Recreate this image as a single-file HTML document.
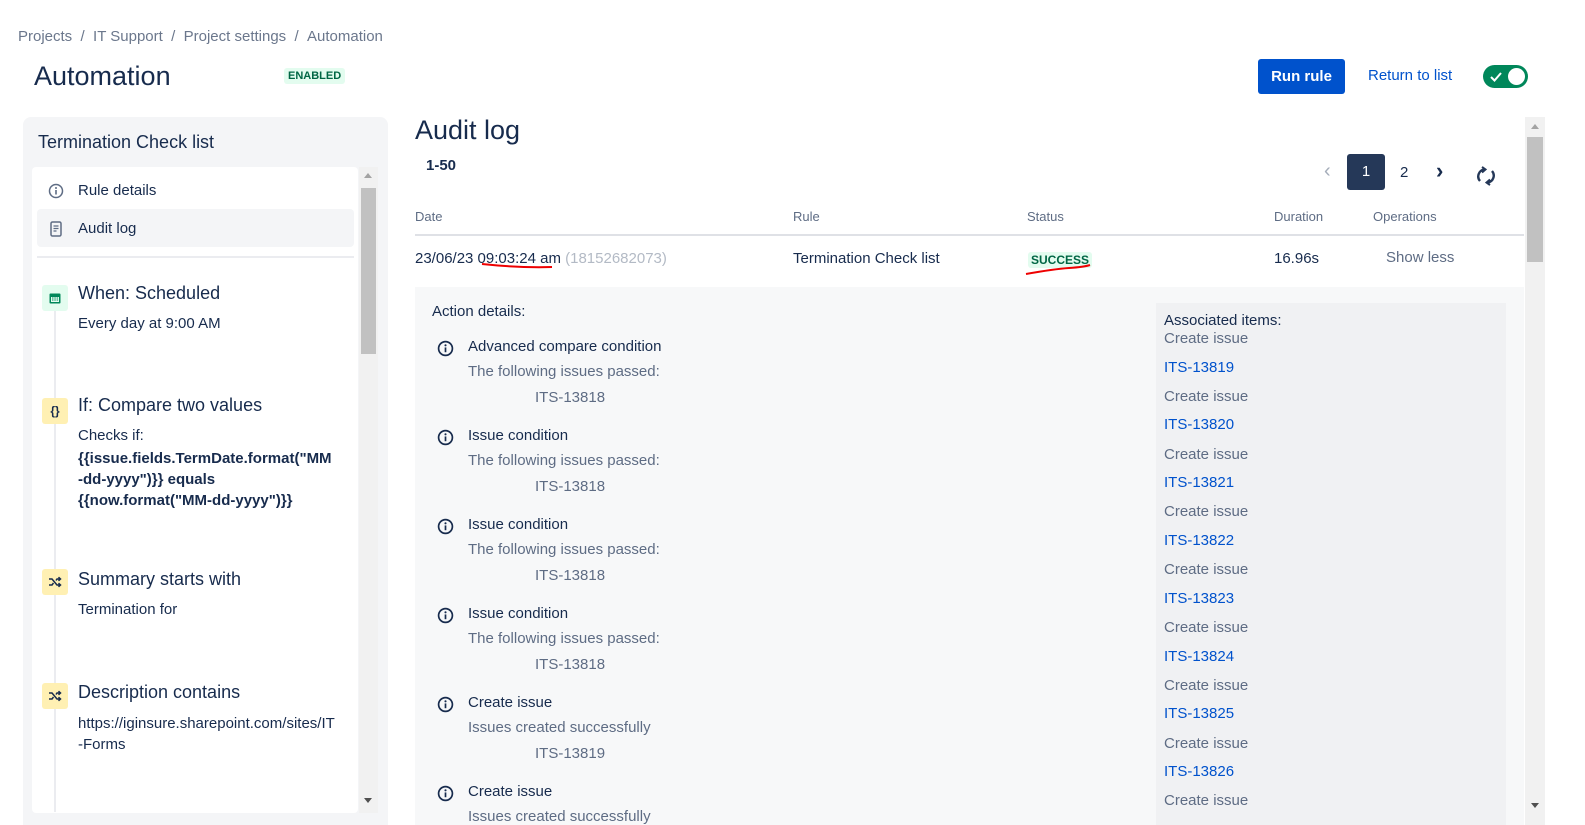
<!DOCTYPE html>
<html style="overflow:hidden;width:1585px;height:825px"><head><meta charset="utf-8"><style>
*{margin:0;padding:0;box-sizing:border-box}
body{width:1585px;height:825px;overflow:hidden;background:#fff;font-family:"Liberation Sans",sans-serif;color:#172b4d;font-size:15px}
#w{position:relative;width:1585px;height:825px;overflow:hidden}
.a{position:absolute;white-space:nowrap}
.g{color:#5e6c84}
.link{color:#0052cc}
.ic{position:absolute;width:26px;height:26px;border-radius:3px;display:flex;align-items:center;justify-content:center}
</style></head><body><div id="w">
<div class="a g" style="left:18px;top:28px;font-size:15px;color:#6b778c">Projects &nbsp;/ &nbsp;IT Support &nbsp;/ &nbsp;Project settings &nbsp;/ &nbsp;Automation</div>
<div class="a" style="left:34px;top:61px;font-size:27px">Automation</div>
<div class="a" style="left:284px;top:68px;background:#e3fcef;color:#006644;font-size:11px;font-weight:bold;padding:2px 4px;border-radius:3px">ENABLED</div>
<div class="a" style="left:1258px;top:59px;width:87px;height:35px;background:#0052cc;border-radius:3px;color:#fff;font-weight:bold;font-size:15px;text-align:center;line-height:35px">Run rule</div>
<div class="a link" style="left:1368px;top:67px;font-size:15px">Return to list</div>
<div class="a" style="left:1483px;top:65px;width:45px;height:23px;background:#00875a;border-radius:12px">
<svg style="position:absolute;left:7px;top:6px" width="12" height="11" viewBox="0 0 12 11"><path d="M1 6l3.5 3.5L11 2" stroke="#fff" stroke-width="2" fill="none"/></svg>
<div style="position:absolute;right:3px;top:3px;width:17px;height:17px;border-radius:50%;background:#fff"></div></div>

<div class="a" style="left:23px;top:117px;width:365px;height:720px;background:#f4f5f7;border-radius:8px"></div>
<div class="a" style="left:38px;top:132px;font-size:18px">Termination Check list</div>
<div class="a" style="left:32px;top:167px;width:326px;height:646px;background:#fff;border-radius:4px"></div>
<div class="a" style="left:359px;top:167px;width:19px;height:646px;background:#f1f1f1"></div>
<div class="a" style="left:361px;top:188px;width:15px;height:166px;background:#c1c1c1"></div>
<div class="a" style="left:364px;top:173px;border:4px solid transparent;border-bottom:5px solid #a3a3a3;border-top:0"></div>
<div class="a" style="left:364px;top:798px;border:4px solid transparent;border-top:5px solid #505050;border-bottom:0"></div>
<svg class="a" style="left:48px;top:183px" width="16" height="16" viewBox="0 0 16 16"><circle cx="8" cy="8" r="6.5" stroke="#5e6c84" stroke-width="1.5" fill="none"/><rect x="7.2" y="7" width="1.6" height="4.5" fill="#5e6c84"/><circle cx="8" cy="5" r="1" fill="#5e6c84"/></svg>
<div class="a" style="left:78px;top:182px">Rule details</div>
<div class="a" style="left:37px;top:209px;width:317px;height:38px;background:#f4f5f7;border-radius:4px"></div>
<svg class="a" style="left:50px;top:221px" width="12" height="16" viewBox="0 0 12 16"><rect x="1" y="1" width="10" height="14" rx="1.5" stroke="#5e6c84" stroke-width="1.5" fill="none"/><path d="M3.5 5h5M3.5 7.5h5M3.5 10h3" stroke="#5e6c84" stroke-width="1.2"/></svg>
<div class="a" style="left:78px;top:220px">Audit log</div>
<div class="a" style="left:37px;top:256px;width:317px;height:2px;background:#ebecf0"></div>
<div class="a" style="left:54px;top:300px;width:2px;height:512px;background:#ebecf0"></div>
<div class="ic" style="left:42px;top:285px;background:#e3fcef"><svg width="12" height="12" viewBox="0 0 12 12"><rect x="0.5" y="1.5" width="11" height="10" rx="1" fill="#00875a"/><rect x="2" y="5" width="8" height="5" fill="#e3fcef"/><path d="M3 6h1.5M5.3 6h1.5M7.6 6h1.5M3 8h1.5M5.3 8h1.5M7.6 8h1.5" stroke="#00875a" stroke-width="1"/></svg></div>
<div class="a" style="left:78px;top:283px;font-size:18px">When: Scheduled</div>
<div class="a" style="left:78px;top:315px">Every day at 9:00 AM</div>
<div class="ic" style="left:42px;top:398px;background:#fff0b3;font-size:12px;font-weight:bold">{}</div>
<div class="a" style="left:78px;top:395px;font-size:18px">If: Compare two values</div>
<div class="a" style="left:78px;top:427px">Checks if:</div>
<div class="a" style="left:78px;top:448px;font-weight:bold;line-height:21px">{{issue.fields.TermDate.format("MM<br>-dd-yyyy")}} equals<br>{{now.format("MM-dd-yyyy")}}</div>
<div class="ic" style="left:42px;top:569px;background:#fff0b3"><svg width="14" height="12" viewBox="0 0 14 12"><path d="M1 3h3l5 6h3M1 9h3l1.5-2M8 4.5L9 3h3M10.5 1.2L12.5 3l-2 1.8M10.5 7.2L12.5 9l-2 1.8" stroke="#172b4d" stroke-width="1.5" fill="none"/></svg></div>
<div class="a" style="left:78px;top:569px;font-size:18px">Summary starts with</div>
<div class="a" style="left:78px;top:601px">Termination for</div>
<div class="ic" style="left:42px;top:683px;background:#fff0b3"><svg width="14" height="12" viewBox="0 0 14 12"><path d="M1 3h3l5 6h3M1 9h3l1.5-2M8 4.5L9 3h3M10.5 1.2L12.5 3l-2 1.8M10.5 7.2L12.5 9l-2 1.8" stroke="#172b4d" stroke-width="1.5" fill="none"/></svg></div>
<div class="a" style="left:78px;top:682px;font-size:18px">Description contains</div>
<div class="a" style="left:78px;top:713px;line-height:21px">https://iginsure.sharepoint.com/sites/IT<br>-Forms</div>

<div class="a" style="left:415px;top:115px;font-size:27px">Audit log</div>
<div class="a" style="left:426px;top:157px;font-weight:bold;font-size:15px">1-50</div>
<div class="a" style="left:1324px;top:160px;color:#a5adba;font-size:20px">‹</div>
<div class="a" style="left:1347px;top:154px;width:38px;height:36px;background:#253858;border-radius:3px;color:#fff;text-align:center;line-height:36px">1</div>
<div class="a" style="left:1400px;top:164px">2</div>
<div class="a" style="left:1436px;top:158px;font-size:22px;font-weight:bold">›</div>
<svg class="a" style="left:1476px;top:166px" width="20" height="20" viewBox="0 0 20 20"><path d="M4 15A7 7 0 0 1 8 3.5M16 5a7 7 0 0 1-4 11.5" stroke="#253858" stroke-width="2.4" fill="none"/><path d="M6 1l3.5 2.5L6 6.5M14 19l-3.5-2.5L14 13.5" stroke="#253858" stroke-width="2" fill="none"/></svg>
<div class="a g" style="left:415px;top:209px;font-size:13px">Date</div>
<div class="a g" style="left:793px;top:209px;font-size:13px">Rule</div>
<div class="a g" style="left:1027px;top:209px;font-size:13px">Status</div>
<div class="a g" style="left:1274px;top:209px;font-size:13px">Duration</div>
<div class="a g" style="left:1373px;top:209px;font-size:13px">Operations</div>
<div class="a" style="left:415px;top:234px;width:1109px;height:2px;background:#dfe1e6"></div>
<div class="a" style="left:415px;top:250px">23/06/23 09:03:24 am <span style="color:#b3bac5">(18152682073)</span></div>
<svg class="a" style="left:480px;top:262px" width="80" height="8"><path d="M2 2Q40 6 72 5" stroke="#e00" stroke-width="2" fill="none"/></svg>
<div class="a" style="left:793px;top:250px">Termination Check list</div>
<div class="a" style="left:1028px;top:252px;background:#e3fcef;color:#006644;font-size:12px;font-weight:bold;padding:1px 3px;border-radius:3px">SUCCESS</div>
<svg class="a" style="left:1024px;top:262px" width="70" height="14"><path d="M2 12Q30 7 45 6T66 3" stroke="#e00" stroke-width="2" fill="none"/></svg>
<div class="a" style="left:1274px;top:250px">16.96s</div>
<div class="a g" style="left:1386px;top:249px">Show less</div>

<div class="a" style="left:415px;top:287px;width:1109px;height:538px;background:#f7f8f9"></div>
<div class="a" style="left:432px;top:303px">Action details:</div>
<div id="acts"></div>
<div class="a" style="left:1156px;top:303px;width:350px;height:522px;background:#f0f1f3"></div>
<div class="a" style="left:1164px;top:312px">Associated items:</div>
<div id="assoc"></div>

<div class="a" style="left:1525px;top:117px;width:20px;height:708px;background:#f1f1f1"></div>
<div class="a" style="left:1527px;top:137px;width:16px;height:125px;background:#c1c1c1"></div>
<div class="a" style="left:1531px;top:124px;border:4px solid transparent;border-bottom:5px solid #a3a3a3;border-top:0"></div>
<div class="a" style="left:1531px;top:803px;border:4px solid transparent;border-top:5px solid #505050;border-bottom:0"></div>
</div>
<script>
var acts=[["Advanced compare condition","The following issues passed:","ITS-13818"],["Issue condition","The following issues passed:","ITS-13818"],["Issue condition","The following issues passed:","ITS-13818"],["Issue condition","The following issues passed:","ITS-13818"],["Create issue","Issues created successfully","ITS-13819"],["Create issue","Issues created successfully","ITS-13820"]];
var h="";
acts.forEach(function(a,i){var y=338+i*89;
h+='<svg class="a" style="left:437px;top:'+(y+2)+'px" width="17" height="17" viewBox="0 0 16 16"><circle cx="8" cy="8" r="6.5" stroke="#172b4d" stroke-width="1.6" fill="none"/><rect x="7.2" y="7" width="1.6" height="4.5" fill="#172b4d"/><circle cx="8" cy="5" r="1" fill="#172b4d"/></svg>';
h+='<div class="a" style="left:468px;top:'+y+'px">'+a[0]+'</div>';
h+='<div class="a g" style="left:468px;top:'+(y+25)+'px">'+a[1]+'</div>';
h+='<div class="a g" style="left:535px;top:'+(y+51)+'px">'+a[2]+'</div>';});
document.getElementById('acts').innerHTML=h;
h="";
for(var i=0;i<9;i++){var y=330+i*57.8;
h+='<div class="a g" style="left:1164px;top:'+y+'px">Create issue</div>';
if(i<8)h+='<div class="a link" style="left:1164px;top:'+(y+28.5)+'px">ITS-'+(13819+i)+'</div>';}
document.getElementById('assoc').innerHTML=h;
</script>
</body></html>
